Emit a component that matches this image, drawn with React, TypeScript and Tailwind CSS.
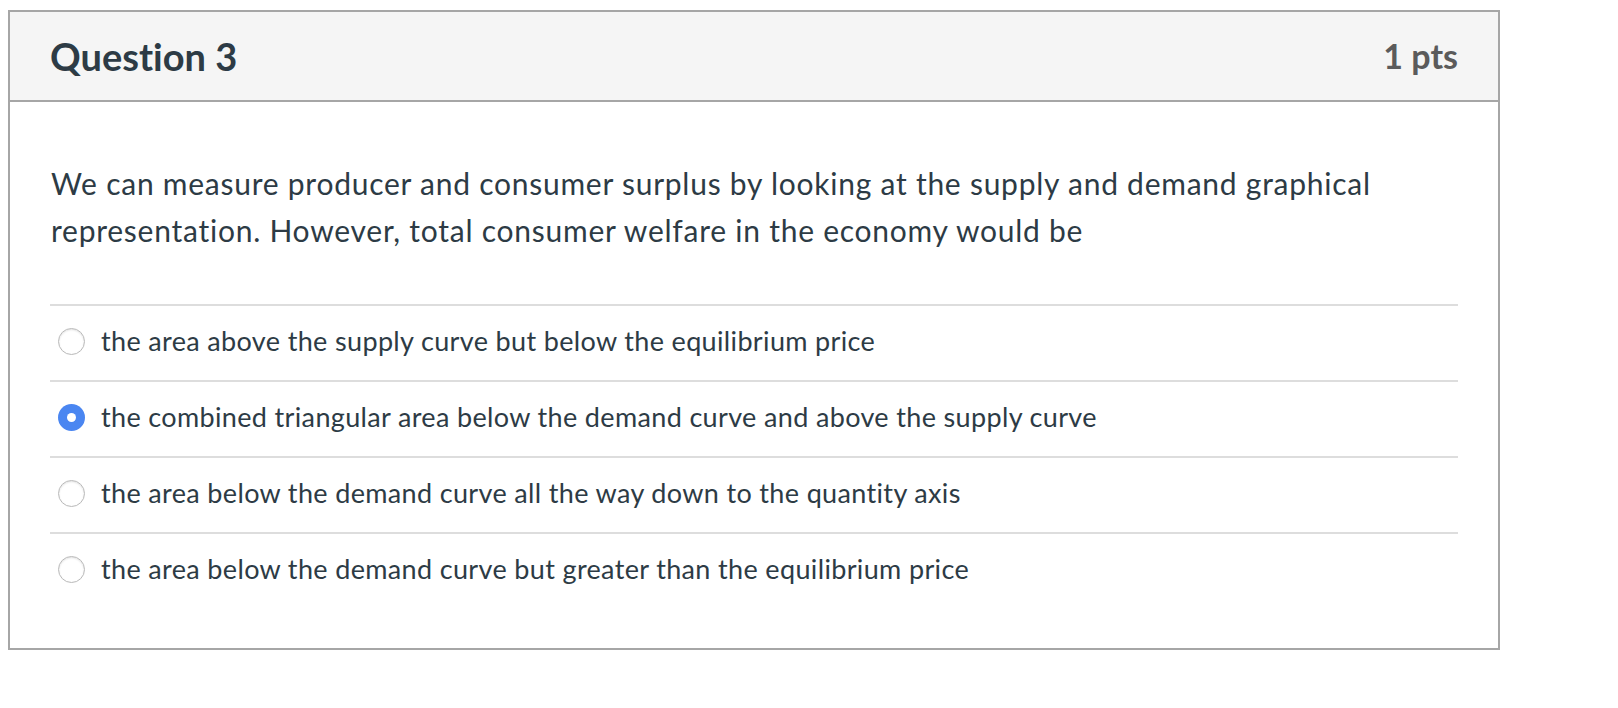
const options = [
  "the area above the supply curve but below the equilibrium price",
  "the combined triangular area below the demand curve and above the supply curve",
  "the area below the demand curve all the way down to the quantity axis",
  "the area below the demand curve but greater than the equilibrium price",
];

const Radio = ({ checked }: { checked: boolean }) =>
  checked ? (
    <span className="w-[27px] h-[27px] rounded-full bg-[#4a86f1] flex items-center justify-center flex-shrink-0">
      <span className="w-[9px] h-[9px] rounded-full bg-white" />
    </span>
  ) : (
    <span className="w-[27px] h-[27px] rounded-full border border-[#b9b9b9] bg-white shadow-[inset_0_1px_2px_rgba(0,0,0,0.12)] flex-shrink-0" />
  );

export default function App() {
  const selected = 1;
  return (
    <div className="min-h-screen bg-white pt-[10px] pl-2 font-['Lato',sans-serif] [font-variant-ligatures:none]">
      <div className="w-[1492px] h-[640px] border-2 border-[#a6a6a6] bg-white">
        {/* header */}
        <div className="h-[90px] bg-[#f5f5f5] border-b-2 border-[#a6a6a6] flex items-center justify-between px-10">
          <h2 className="text-[38px] leading-none font-bold text-[#2d3b45]">Question 3</h2>
          <span className="text-[34px] leading-none font-bold text-[#5b5b5b]">1 pts</span>
        </div>

        {/* body */}
        <div className="px-10 pt-[58px]">
          <p className="text-[30px] leading-[47px] tracking-[0.75px] text-[#2d3b45] pl-px">
            We can measure producer and consumer surplus by looking at the supply and demand graphical representation. However, total consumer welfare in the economy would be
          </p>

          <div className="mt-[50px]">
            {options.map((o, i) => (
              <div key={o} className="border-t-2 border-[#dddddd] h-[76px] flex items-center gap-4 pl-2 pb-[4px]">
                <Radio checked={i === selected} />
                <span className="text-[27px] tracking-[0.35px] text-[#2d3b45]">{o}</span>
              </div>
            ))}
          </div>
        </div>
      </div>
    </div>
  );
}
